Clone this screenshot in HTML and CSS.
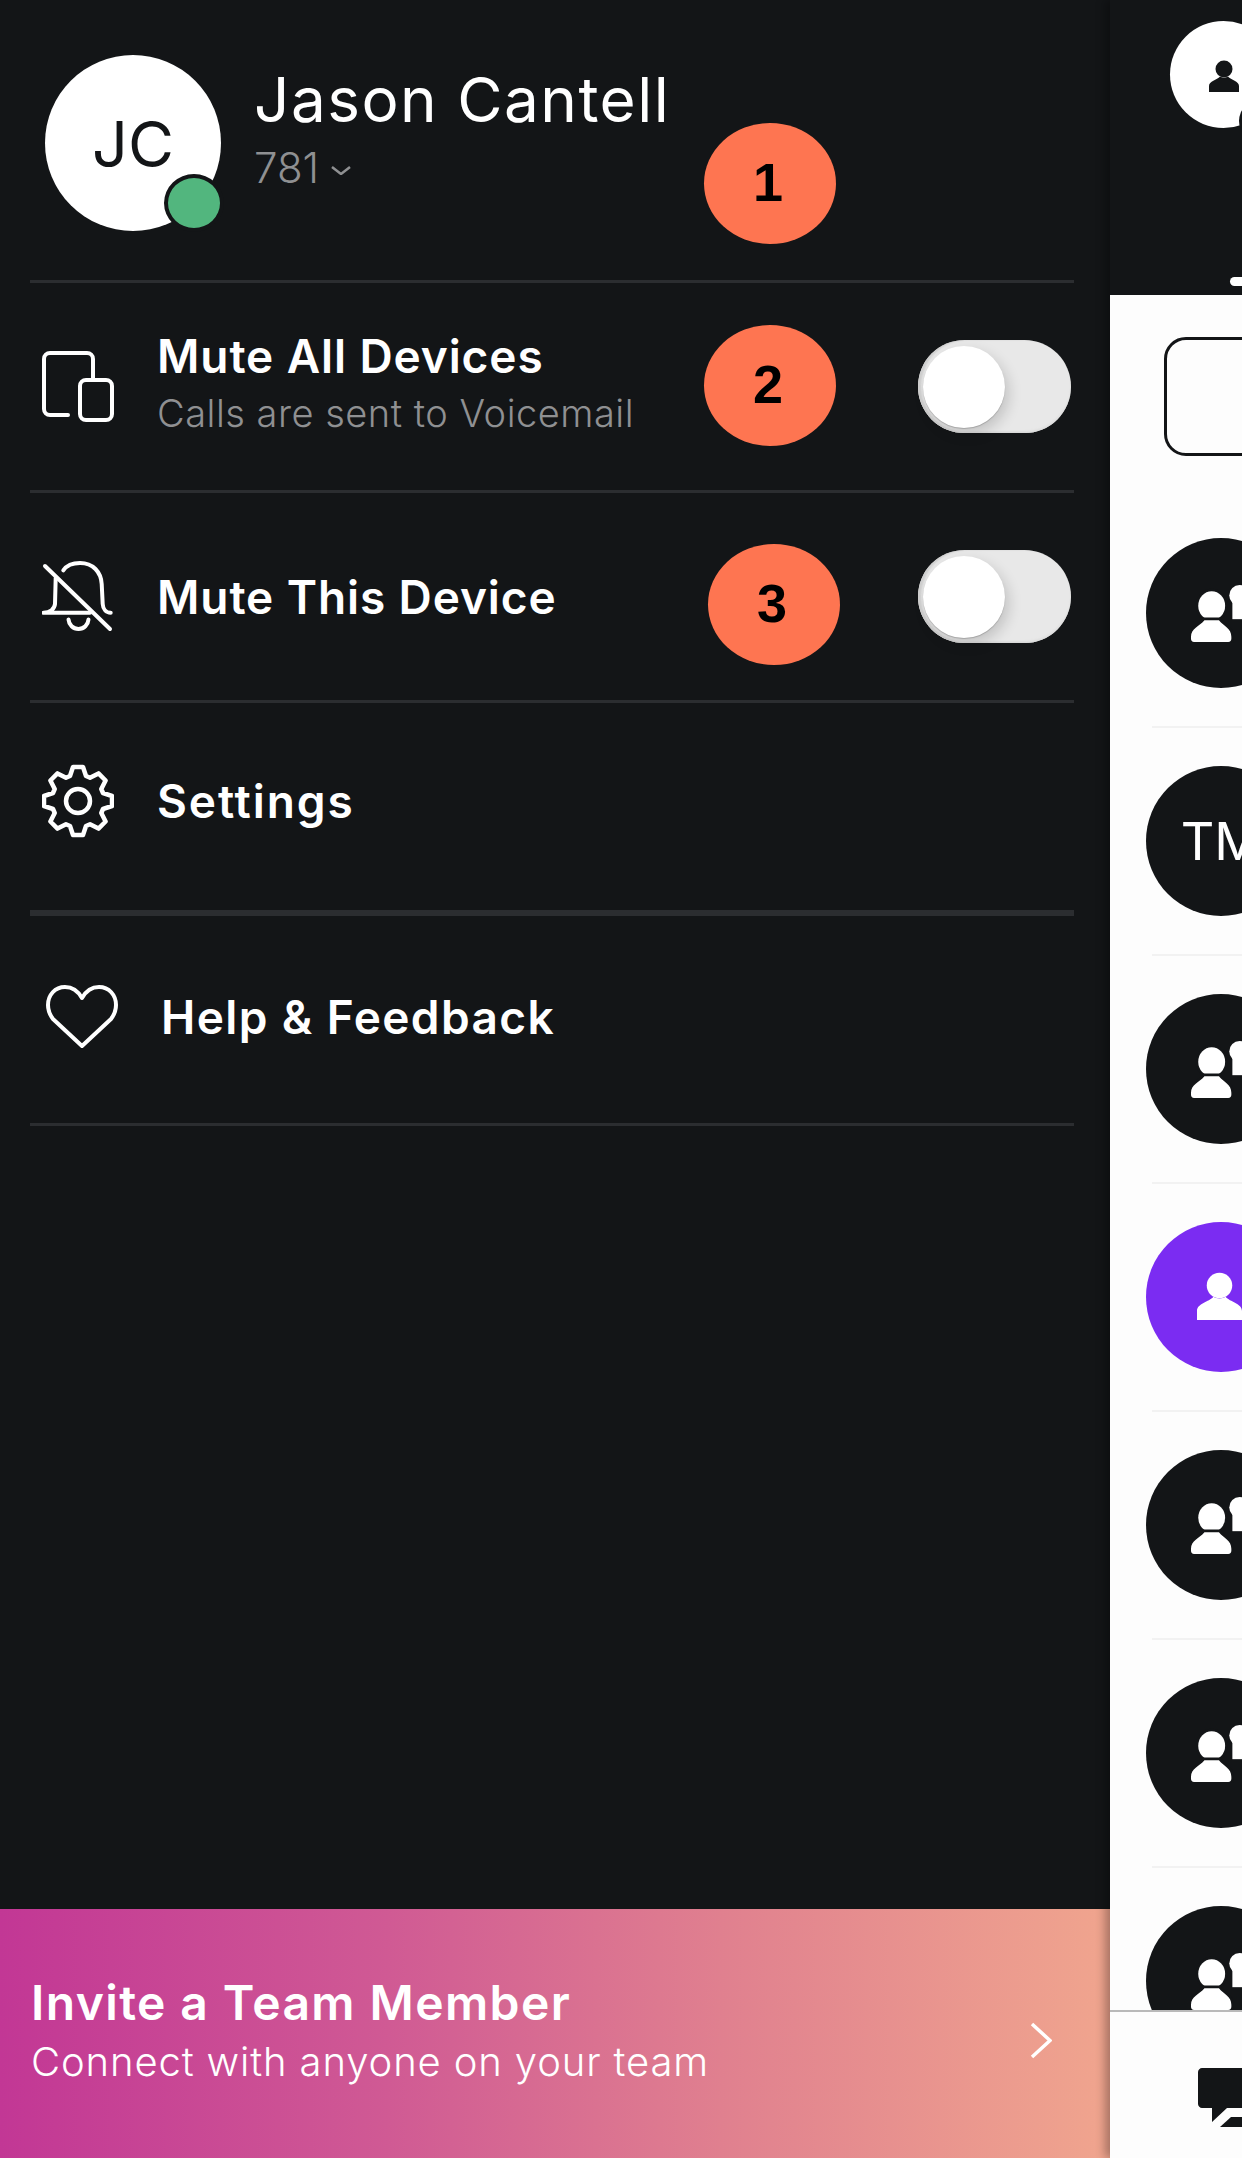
FILE: index.html
```html
<!DOCTYPE html>
<html lang="en">
<head>
    <meta charset="UTF-8">
    <meta name="viewport" content="width=device-width, initial-scale=1.0">
    <title>Menu</title>
    <link rel="stylesheet" href="styles.css">
</head>
<body>
    <svg class="defs" width="0" height="0">
        <symbol id="person" viewBox="0 0 30 32">
            <circle cx="15" cy="9" r="8.5"/>
            <path d="M0 32V26C0 21 8 20 11 16.500C13 18 17 18 19 16.500C22 20 30 21 30 26V32Z"/>
        </symbol>
        <symbol id="group" viewBox="0 0 58 56">
            <circle cx="47" cy="10" r="10"/>
            <rect x="40" y="16" width="18" height="17"/>
            <g class="group-front">
                <ellipse cx="20" cy="20" rx="13" ry="14"/>
                <path d="M0 50C0 42 8 40 13 34H27C32 40 39 42 39 50V52C39 54 38 55 36 55H3C1 55 0 54 0 52Z"/>
            </g>
        </symbol>
    </svg>

    <div class="app">
        <nav class="drawer">
            <header class="profile">
                <div class="profile-avatar">
                    JC
                    <span class="status-dot"></span>
                </div>
                <div class="profile-text">
                    <div class="profile-name">Jason Cantell</div>
                    <div class="profile-ext">781
                        <svg class="ext-chevron" viewBox="0 0 20 9"><path d="M1 1l9 7 9-7"/></svg>
                    </div>
                </div>
            </header>

            <div class="row row-double">
                <svg class="row-icon" viewBox="0 0 72 72">
                    <path d="M51 27V8a6 6 0 0 0-6-6H8a6 6 0 0 0-6 6V58a6 6 0 0 0 6 6H26"/>
                    <rect x="38" y="29" width="32" height="40" rx="6"/>
                </svg>
                <div class="row-text">
                    <div class="row-title">Mute All Devices</div>
                    <div class="row-sub">Calls are sent to Voicemail</div>
                </div>
                <div class="toggle"><span class="knob"></span></div>
            </div>

            <div class="row">
                <svg class="row-icon" viewBox="0 0 72 72">
                    <path d="M21.300 9.300C25 4 31 2 38 2C51 2 59 11 59.700 23L60.700 43C61 48 64 51.700 68.700 51.700"/>
                    <path d="M13.700 17L13 43C12.500 48 8 51.700 1.500 51.700H48"/>
                    <path d="M26.500 58.500C27 64 31 68 36.500 68C42 68 46 64 46.500 58.500"/>
                    <path d="M3 5L68 68"/>
                </svg>
                <div class="row-text">
                    <div class="row-title">Mute This Device</div>
                </div>
                <div class="toggle"><span class="knob"></span></div>
            </div>

            <div class="row row-settings">
                <svg class="row-icon row-icon-gear" viewBox="-36 -37 72 74">
                    <circle r="12"/>
                    <path d="M-8-25L-5-34H5L8-25L12-23.300L20.500-27.600L27.600-20.500L23.300-12L25-8L34-5V5L25 8L23.300 12L27.600 20.500L20.500 27.600L12 23.300L8 25L5 34H-5L-8 25L-12 23.300L-20.500 27.600L-27.600 20.500L-23.300 12L-25 8L-34 5V-5L-25-8L-23.300-12L-27.600-20.500L-20.500-27.600L-12-23.300Z"/>
                </svg>
                <div class="row-text">
                    <div class="row-title">Settings</div>
                </div>
            </div>

            <div class="row row-help">
                <svg class="row-icon" viewBox="0 0 72 64">
                    <path d="M36 13C32 6 26 2 19 2C9 2 2 10 2 20C2 26 4 30 7 34L36 61L65 34C68 30 70 26 70 20C70 10 63 2 53 2C46 2 40 6 36 13Z"/>
                </svg>
                <div class="row-text">
                    <div class="row-title">Help &amp; Feedback</div>
                </div>
            </div>

            <a class="invite">
                <div class="invite-text">
                    <div class="invite-title">Invite a Team Member</div>
                    <div class="invite-sub">Connect with anyone on your team</div>
                </div>
                <svg class="invite-chevron" viewBox="0 0 22 37"><path d="M2 2L20 18.500L2 35"/></svg>
            </a>

            <span class="badge badge-1">1</span>
            <span class="badge badge-2">2</span>
            <span class="badge badge-3">3</span>
        </nav>

        <section class="panel">
            <div class="panel-top">
                <div class="me">
                    <svg class="me-icon"><use href="#person"/></svg>
                    <span class="me-dot"></span>
                </div>
                <div class="tab-mark"></div>
            </div>
            <div class="search"></div>
            <div class="contacts">
                <div class="contact"><div class="circle"><svg class="group-icon"><use href="#group"/></svg></div></div>
                <div class="contact"><div class="circle">TM</div></div>
                <div class="contact"><div class="circle"><svg class="group-icon"><use href="#group"/></svg></div></div>
                <div class="contact"><div class="circle circle-purple"><svg class="person-icon"><use href="#person"/></svg></div></div>
                <div class="contact"><div class="circle"><svg class="group-icon"><use href="#group"/></svg></div></div>
                <div class="contact"><div class="circle"><svg class="group-icon"><use href="#group"/></svg></div></div>
                <div class="contact"><div class="circle"><svg class="group-icon"><use href="#group"/></svg></div></div>
            </div>
            <div class="tabbar">
                <svg class="chat-icon" viewBox="0 0 60 60">
                    <path d="M4 0H60V40H29L14 54V40H4C2 40 0 38 0 36V4C0 2 2 0 4 0Z"/>
                    <path d="M33 49H60V59H22Z"/>
                </svg>
            </div>
        </section>
    </div>
</body>
</html>
```

FILE: styles.css
```css
* {
    box-sizing: border-box;
}
body {
    margin: 0;
    font-family: Inter, "Noto Sans", sans-serif;
    background-color: #131517;
    overflow: hidden;
}
.defs {
    position: absolute;
}
.app {
    display: flex;
    width: 1242px;
    height: 2158px;
}

/* left drawer */
.drawer {
    position: relative;
    display: flex;
    flex-direction: column;
    width: 1110px;
    flex-shrink: 0;
    background-color: #131517;
    color: #fff;
}
.profile {
    display: flex;
    height: 283px;
    margin: 0 36px 0 30px;
    padding: 55px 0 0 15px;
    border-bottom: 3px solid #2b2d30;
}
.profile-avatar {
    position: relative;
    display: flex;
    align-items: center;
    justify-content: center;
    width: 176px;
    height: 176px;
    padding-top: 2px;
    border-radius: 50%;
    background-color: #fff;
    color: #131517;
    font-size: 63px;
}
.status-dot {
    position: absolute;
    right: -3px;
    bottom: -1px;
    width: 60px;
    height: 58px;
    border: 4px solid #131517;
    border-radius: 50%;
    background-color: #52b67e;
}
.profile-text {
    margin-left: 33px;
    padding-top: 10px;
}
.profile-name {
    font-size: 62px;
    line-height: 70px;
    letter-spacing: 1.500px;
}
.profile-ext {
    display: flex;
    align-items: center;
    margin-top: 3px;
    font-size: 42px;
    line-height: 60px;
    font-weight: 300;
    color: #8f9092;
}
.ext-chevron {
    width: 20px;
    height: 9px;
    margin: 4px 0 0 12px;
    fill: none;
    stroke: #8f9092;
    stroke-width: 2.500;
}

.row {
    display: flex;
    align-items: center;
    height: 210px;
    margin: 0 36px 0 30px;
    padding-left: 12px;
    border-bottom: 3px solid #2b2d30;
}
.row-double .row-text {
    margin-bottom: 10px;
}
.row-settings {
    height: 213px;
    padding-bottom: 12px;
    border-bottom-width: 6px;
}
.row-settings .row-title {
    letter-spacing: 1.900px;
}
.row-help {
    height: 210px;
    padding-left: 16px;
    padding-bottom: 6px;
}
.row-help .row-title {
    letter-spacing: 1.400px;
}
.row-icon {
    width: 72px;
    height: 72px;
    flex-shrink: 0;
    margin-right: 43px;
    fill: none;
    stroke: #fff;
    stroke-width: 4;
    stroke-linecap: round;
    stroke-linejoin: round;
}
.row-icon-gear {
    height: 74px;
    stroke-width: 4.500;
}
.row-text {
    flex: 1;
}
.row-title {
    font-size: 46px;
    line-height: 56px;
    font-weight: 600;
    letter-spacing: 0.900px;
}
.row-sub {
    margin-top: 6px;
    font-size: 38px;
    line-height: 46px;
    font-weight: 300;
    letter-spacing: 0.500px;
    color: #8f9092;
}
.toggle {
    display: flex;
    align-items: center;
    width: 153px;
    height: 93px;
    margin-right: 3px;
    padding-left: 5px;
    border-radius: 47px;
    background-color: #e8e8e8;
    box-shadow: inset 3px 0 2px #cfcfcf, inset 0 -2px 2px #dedede;
}
.knob {
    width: 82px;
    height: 82px;
    border-radius: 50%;
    background-color: #fff;
    box-shadow: 0 1px 1px rgba(0, 0, 0, 0.2), 4px 6px 14px rgba(0, 0, 0, 0.16);
}

.invite {
    display: flex;
    align-items: center;
    justify-content: space-between;
    height: 249px;
    margin-top: auto;
    padding: 0 58px 0 31px;
    background: linear-gradient(90deg, #c23795 0%, #d05a94 35%, #e0808f 65%, #f0a58e 100%);
}
.invite-text {
    padding-bottom: 6px;
}
.invite-title {
    margin-bottom: 5px;
    font-size: 48px;
    line-height: 58px;
    font-weight: 600;
    letter-spacing: 1.400px;
}
.invite-sub {
    font-size: 40px;
    line-height: 50px;
    font-weight: 300;
    letter-spacing: 0.870px;
}
.invite-chevron {
    width: 22px;
    height: 37px;
    margin-top: 14px;
    fill: none;
    stroke: #fff;
    stroke-width: 3.500;
}

.badge {
    position: absolute;
    display: flex;
    align-items: center;
    justify-content: center;
    width: 132px;
    height: 121px;
    padding: 0 4px 3px 0;
    border-radius: 50%;
    background-color: #fe7551;
    color: #000;
    font-family: "Liberation Sans", Arial, sans-serif;
    font-size: 54px;
    font-weight: 700;
}
.badge-1 {
    left: 704px;
    top: 123px;
}
.badge-2 {
    left: 704px;
    top: 325px;
}
.badge-3 {
    left: 708px;
    top: 544px;
}

/* right panel, cut off by the screen edge */
.panel {
    position: relative;
    display: flex;
    flex-direction: column;
    flex: 1;
    min-width: 0;
    overflow: hidden;
    background-color: #fdfdfd;
    box-shadow: -5px 0 9px rgba(0, 0, 0, 0.3);
}
.panel-top {
    height: 295px;
    flex-shrink: 0;
    padding: 21px 0 0 60px;
    background-color: #131517;
}
.me {
    position: relative;
    display: flex;
    align-items: flex-start;
    justify-content: center;
    width: 107px;
    height: 107px;
    padding-top: 39px;
    border-radius: 50%;
    background-color: #fff;
}
.me-icon {
    width: 30px;
    height: 32px;
    fill: #131517;
}
.me-dot {
    position: absolute;
    left: 69px;
    top: 79px;
    width: 42px;
    height: 42px;
    border-radius: 50%;
    background-color: #131517;
}
.tab-mark {
    width: 50px;
    height: 9px;
    margin: 149px 0 0 60px;
    border-radius: 5px;
    background-color: #fff;
}
.search {
    width: 200px;
    height: 119px;
    flex-shrink: 0;
    margin: 42px 0 82px 54px;
    border: 3px solid #131517;
    border-radius: 22px;
}
.contacts {
    flex: 1;
    min-height: 0;
    overflow: hidden;
}
.contact {
    margin: 0 0 38px 42px;
    padding-bottom: 38px;
    border-bottom: 2px solid #f2f2f2;
}
.circle {
    display: flex;
    align-items: center;
    justify-content: center;
    width: 150px;
    height: 150px;
    margin-left: -6px;
    border-radius: 50%;
    background-color: #131517;
    color: #fff;
    font-size: 52px;
}
.circle-purple {
    background-color: #7b2cf2;
}
.group-icon {
    width: 60px;
    height: 58px;
    margin-top: 2px;
    fill: #fff;
}
.group-front {
    stroke: #131517;
    stroke-width: 5;
    paint-order: stroke;
}
.person-icon {
    width: 45px;
    height: 50px;
    margin: -2px 0 0 -3px;
    fill: #fff;
}
.tabbar {
    height: 148px;
    flex-shrink: 0;
    padding: 56px 0 0 88px;
    border-top: 2px solid #b9b9b9;
    background-color: #fdfdfd;
}
.chat-icon {
    width: 60px;
    height: 60px;
    fill: #131517;
}
```
